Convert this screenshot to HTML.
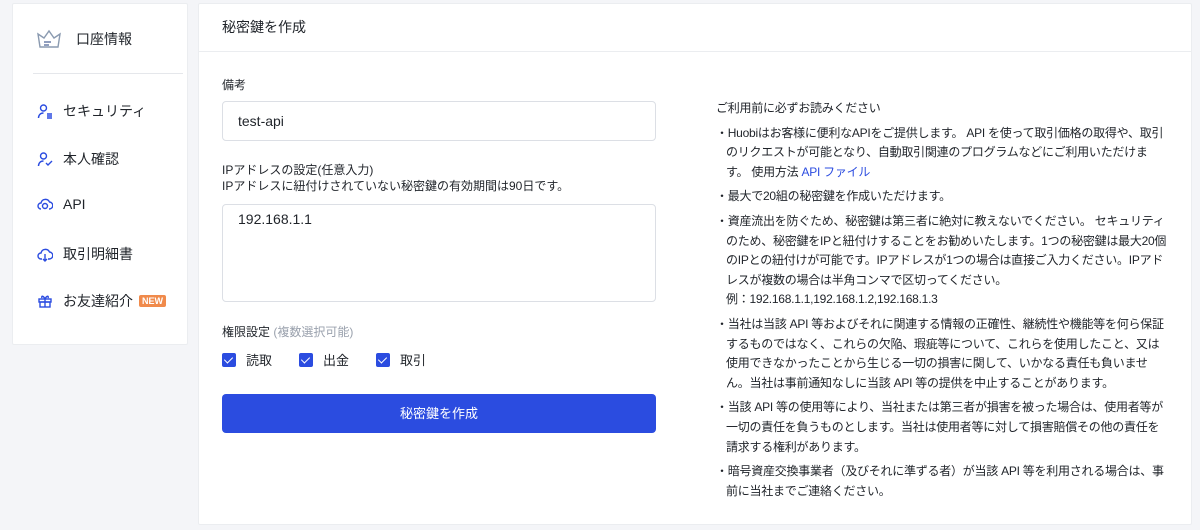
<!DOCTYPE html>
<html><head><meta charset="utf-8"><style>
*{box-sizing:border-box;margin:0;padding:0}
body{width:1200px;height:530px;background:#f4f5f8;font-family:"Liberation Sans","Noto Sans CJK JP",sans-serif;color:#1f2329;position:relative;overflow:hidden}
.side{position:absolute;left:12px;top:3px;width:176px;height:342px;background:#fff;border:1px solid #ebedf0;border-radius:2px}
.main{position:absolute;left:198px;top:3px;width:994px;height:522px;background:#fff;border:1px solid #ebedf0;border-radius:2px}
.hd{height:48px;border-bottom:1px solid #ebedf0;padding-left:23px;line-height:47px;font-size:14px}
.a{position:absolute}
.item{position:absolute;left:24px;font-size:14px;display:flex;align-items:center}
.item svg{width:16px;height:16px;margin-right:10px}
.lbl{font-size:12px;color:#1f2329}
.inp{position:absolute;left:23px;width:434px;border:1px solid #dcdfe5;border-radius:4px;font-size:14px;padding-left:15px}
.cb{display:inline-block;width:14px;height:14px;background:#2b4ce0;border-radius:2px;vertical-align:-2px;margin-right:10px;position:relative}
.cb:after{content:"";position:absolute;left:4px;top:2px;width:4px;height:7px;border:solid #fff;border-width:0 1.5px 1.5px 0;transform:rotate(45deg)}
.btn{position:absolute;left:23px;top:390px;width:434px;height:39px;background:#2b4ce0;border-radius:4px;color:#fff;font-size:13px;text-align:center;line-height:39px}
.rt{position:absolute;left:517px;top:95px;width:460px;font-size:12px;line-height:19.6px;color:#1f2329;letter-spacing:-0.25px}
.rt p{margin-bottom:5px;padding-left:10px;text-indent:-10px;white-space:nowrap}
.rt a{color:#2b4ce0}
</style></head><body>
<div class="side">
 <div class="item" style="top:25px;left:23px"><svg viewBox="0 0 26 20" style="width:26px;height:20px;margin-right:14px" fill="none" stroke="#8a9ab0" stroke-width="1.4"><path d="M2 5l6 4 5-7 5 7 6-4-2 13H4z"/><path d="M8 13h7M8 16h5" stroke="#6b7fa8"/></svg>口座情報</div>
 <div class="a" style="left:20px;top:69px;width:150px;border-top:1px solid #e5e7eb"></div>
 <div class="item" style="top:97px"><svg viewBox="0 0 16 16" fill="none" stroke="#2b4ce0" stroke-width="1.4"><circle cx="6.5" cy="5" r="3"/><path d="M1.5 15c0-3 2-5 5-5M10 11h5M10 13h5M10 15h5"/></svg>セキュリティ</div>
 <div class="item" style="top:145px"><svg viewBox="0 0 16 16" fill="none" stroke="#2b4ce0" stroke-width="1.4"><circle cx="6.5" cy="5" r="3"/><path d="M1.5 15c0-3 2-5 5-5M9 12l2 2 4-4"/></svg>本人確認</div>
 <div class="item" style="top:192px"><svg viewBox="0 0 16 16" fill="none" stroke="#2b4ce0" stroke-width="1.4"><path d="M4 13a3 3 0 010-6 4.5 4.5 0 018.5-1 3.5 3.5 0 01-.5 7"/><circle cx="8" cy="10" r="2.5"/></svg>API</div>
 <div class="item" style="top:240px"><svg viewBox="0 0 16 16" fill="none" stroke="#2b4ce0" stroke-width="1.4"><path d="M5 13H4a3 3 0 010-6 4.5 4.5 0 018.5-1 3.5 3.5 0 01-.5 7h-1M8 8v7M6 13l2 2 2-2"/></svg>取引明細書</div>
 <div class="item" style="top:287px"><svg viewBox="0 0 16 16" fill="none" stroke="#2b4ce0" stroke-width="1.4"><rect x="2" y="6" width="12" height="3"/><rect x="3" y="9" width="10" height="5"/><path d="M8 6v8M8 6C6 2 4 3 5 5M8 6c2-4 4-3 3-1"/></svg>お友達紹介<span style="background:#f08a4b;color:#fff;font-size:9px;font-weight:bold;padding:1px 3px;margin-left:6px;border-radius:2px">NEW</span></div>
</div>
<div class="main">
 <div class="hd">秘密鍵を作成</div>
 <div class="a lbl" style="left:23px;top:72px">備考</div>
 <div class="inp" style="top:97px;height:40px;line-height:38px">test-api</div>
 <div class="a lbl" style="left:23px;top:158px;line-height:16px">IPアドレスの設定(任意入力)<br>IPアドレスに紐付けされていない秘密鍵の有効期間は90日です。</div>
 <div class="inp" style="top:200px;height:98px;padding-top:6px">192.168.1.1</div>
 <div class="a lbl" style="left:23px;top:319px">権限設定 <span style="color:#9aa1ad">(複数選択可能)</span></div>
 <div class="a" style="left:23px;top:346px;font-size:13px"><span class="cb"></span>読取<span class="cb" style="margin-left:27px"></span>出金<span class="cb" style="margin-left:27px"></span>取引</div>
 <div class="btn">秘密鍵を作成</div>
 <div class="rt">
  <p style="padding-left:0;text-indent:0">ご利用前に必ずお読みください</p>
  <p>・Huobiはお客様に便利なAPIをご提供します。 API を使って取引価格の取得や、取引<br>のリクエストが可能となり、自動取引関連のプログラムなどにご利用いただけま<br>す。 使用方法 <a>API ファイル</a></p>
  <p>・最大で20組の秘密鍵を作成いただけます。</p>
  <p>・資産流出を防ぐため、秘密鍵は第三者に絶対に教えないでください。 セキュリティ<br>のため、秘密鍵をIPと紐付けすることをお勧めいたします。1つの秘密鍵は最大20個<br>のIPとの紐付けが可能です。IPアドレスが1つの場合は直接ご入力ください。IPアド<br>レスが複数の場合は半角コンマで区切ってください。<br>例：192.168.1.1,192.168.1.2,192.168.1.3</p>
  <p>・当社は当該 API 等およびそれに関連する情報の正確性、継続性や機能等を何ら保証<br>するものではなく、これらの欠陥、瑕疵等について、これらを使用したこと、又は<br>使用できなかったことから生じる一切の損害に関して、いかなる責任も負いませ<br>ん。当社は事前通知なしに当該 API 等の提供を中止することがあります。</p>
  <p>・当該 API 等の使用等により、当社または第三者が損害を被った場合は、使用者等が<br>一切の責任を負うものとします。当社は使用者等に対して損害賠償その他の責任を<br>請求する権利があります。</p>
  <p>・暗号資産交換事業者（及びそれに準ずる者）が当該 API 等を利用される場合は、事<br>前に当社までご連絡ください。</p>
 </div>
</div>
</body></html>
